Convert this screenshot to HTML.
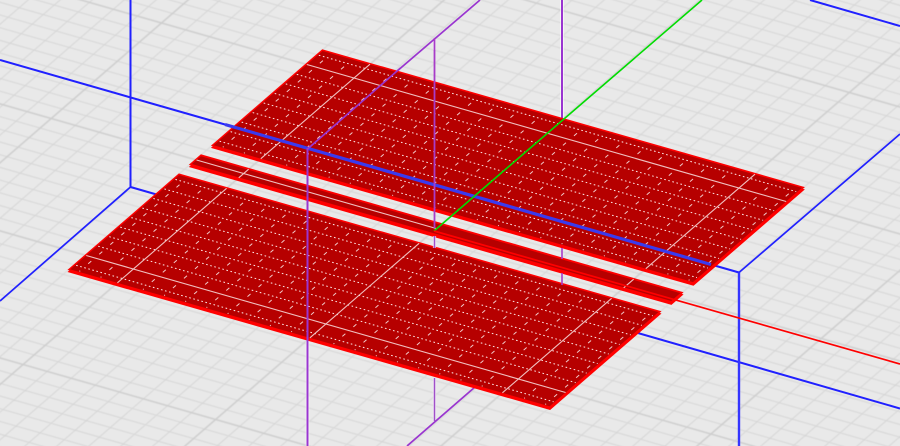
<!DOCTYPE html>
<html><head><meta charset="utf-8"><title>Plates</title>
<style>html,body{margin:0;padding:0;width:900px;height:446px;overflow:hidden;background:#e9e9e9}svg{display:block;overflow:hidden}</style></head>
<body>
<svg xmlns="http://www.w3.org/2000/svg" width="900" height="446" viewBox="0 0 900 446">
<defs>
<filter id="b" x="0" y="0" width="900" height="446" filterUnits="userSpaceOnUse"><feGaussianBlur stdDeviation=".4"/></filter>
<filter id="c" x="0" y="0" width="900" height="446" filterUnits="userSpaceOnUse"><feGaussianBlur stdDeviation=".3"/></filter>
</defs>
<rect width="900" height="446" fill="#e9e9e9"/>
<g filter="url(#b)">
<g transform="matrix(19.25 5.5 -11.03 9.55 354 78)" fill="none">
<path stroke="#d6d6d6" stroke-width="1" vector-effect="non-scaling-stroke" d="M-18-19H38M-18-18H38M-18-17H38M-18-16H38M-18-15H38M-18-14H38M-18-13H38M-18-12H38M-18-11H38M-18-9H38M-18-8H38M-18-7H38M-18-6H38M-18-5H38M-18-4H38M-18-3H38M-18-2H38M-18-1H38M-18 1H38M-18 2H38M-18 3H38M-18 4H38M-18 5H38M-18 6H38M-18 7H38M-18 8H38M-18 9H38M-18 11H38M-18 12H38M-18 13H38M-18 14H38M-18 15H38M-18 16H38M-18 17H38M-18 18H38M-18 19H38M-18 21H38M-18 22H38M-18 23H38M-18 24H38M-18 25H38M-18 26H38M-18 27H38M-18 28H38M-18 29H38M-18 31H38M-18 32H38M-18 33H38M-18 34H38M-18 35H38M-18 36H38M-18 37H38
M-17.5-19V37M-16.25-19V37M-15-19V37M-13.75-19V37M-12.5-19V37M-11.25-19V37M-8.75-19V37M-7.5-19V37M-6.25-19V37M-5-19V37M-3.75-19V37M-2.5-19V37M-1.25-19V37M1.25-19V37M2.5-19V37M3.75-19V37M5-19V37M6.25-19V37M7.5-19V37M8.75-19V37M11.25-19V37M12.5-19V37M13.75-19V37M15-19V37M16.25-19V37M17.5-19V37M18.75-19V37M21.25-19V37M22.5-19V37M23.75-19V37M25-19V37M26.25-19V37M27.5-19V37M28.75-19V37M31.25-19V37M32.5-19V37M33.75-19V37M35-19V37M36.25-19V37M37.5-19V37"/>
<path d="M-18-10H38M-18 0H38M-18 10H38M-18 20H38M-18 30H38M-10-19V37M0-19V37M10-19V37M20-19V37M30-19V37" stroke="#cecece" stroke-width="1.5" vector-effect="non-scaling-stroke"/>
</g>
</g>
<g fill="none" stroke="#2020ff" stroke-width="2">
<path d="M0 60L225 124.5"/>
<path d="M711 264.5L739 272.5"/>
<path d="M130.5 0V187"/>
<path d="M130.5 187L0 301" stroke-width="1.7"/>
<path d="M130.5 187L900 408.5"/>
<path d="M739 272.5L900 134" stroke-width="1.7"/>
<path d="M739 272.5V446" stroke="#3535ff" stroke-width="2.4"/>
<path d="M810 0L900 26"/>
</g>
<g fill="none">
<path d="M562 0V118" stroke="#fff" stroke-width="3.6" opacity=".7"/>
<path d="M562 0V118" stroke="#9a35d0" stroke-width="2"/>
<path d="M434.5 38V50" stroke="#fff" stroke-width="3" opacity=".6"/>
<path d="M480 0L305 150" stroke="#9a35d0" stroke-width="1.7"/>
<path d="M434.5 378V421" stroke="#fff" stroke-width="3.2" opacity=".7"/>
<path d="M434.5 378V421" stroke="#a050c8" stroke-width="1.6"/>
<path d="M490 374L407 446" stroke="#9a35d0" stroke-width="1.7"/>
<path d="M307.5 340V446" stroke="#fff" stroke-width="3.6" opacity=".6"/>
</g>
<!-- plates -->
<g transform="translate(0 2.2)">
<g transform="matrix(19.25 5.5 -11.03 9.55 354 78)" fill="#ff0000" stroke="#ff0000" stroke-width="1.2">
<rect x="-2.5" y="-1.5" width="25" height="10" vector-effect="non-scaling-stroke"/>
<rect x="-2.5" y="9.5" width="25" height="1" vector-effect="non-scaling-stroke"/>
<rect x="-2.5" y="11.5" width="25" height="10" vector-effect="non-scaling-stroke"/>
</g>
</g>
<g transform="matrix(19.25 5.5 -11.03 9.55 354 78)" fill="#ff0000" stroke="#ff0000" stroke-width="1.2">
<rect x="-2.5" y="-1.5" width="25" height="10" vector-effect="non-scaling-stroke"/>
<rect x="-2.5" y="9.5" width="25" height="1" vector-effect="non-scaling-stroke"/>
<rect x="-2.5" y="11.5" width="25" height="10" vector-effect="non-scaling-stroke"/>
</g>
<g transform="matrix(19.25 5.5 -11.03 9.55 354 78)" fill="#b60000">
<rect x="-2.45" y="-1.42" width="24.9" height="9.87"/>
<rect x="-2.45" y="9.6" width="24.9" height=".82"/>
<rect x="-2.45" y="11.58" width="24.9" height="9.87"/>
</g>
<g filter="url(#c)">
<g transform="matrix(19.25 5.5 -11.03 9.55 354 78)" fill="none">
<path d="M-2.4-1H22.4M-2.4 1H22.4M-2.4 2H22.4M-2.4 3H22.4M-2.4 4H22.4M-2.4 5H22.4M-2.4 6H22.4M-2.4 7H22.4M-2.4 8H22.4M-2.4 12H22.4M-2.4 13H22.4M-2.4 14H22.4M-2.4 15H22.4M-2.4 16H22.4M-2.4 17H22.4M-2.4 18H22.4M-2.4 19H22.4M-2.4 21H22.4" stroke="#ffe8e8" stroke-width="1" stroke-dasharray="1.6 2.6" vector-effect="non-scaling-stroke"/>
<path d="M-2-.67V8.4M-.9-.67V8.4M1.3-.67V8.4M2.4-.67V8.4M3.5-.67V8.4M4.6-.67V8.4M5.7-.67V8.4M6.8-.67V8.4M7.9-.67V8.4M9-.67V8.4M11.2-.67V8.4M12.3-.67V8.4M13.4-.67V8.4M14.5-.67V8.4M15.6-.67V8.4M16.7-.67V8.4M17.8-.67V8.4M18.9-.67V8.4M21.1-.67V8.4M22.2-.67V8.4M-2 12.33V21.4M-.9 12.33V21.4M1.3 12.33V21.4M2.4 12.33V21.4M3.5 12.33V21.4M4.6 12.33V21.4M5.7 12.33V21.4M6.8 12.33V21.4M7.9 12.33V21.4M9 12.33V21.4M11.2 12.33V21.4M12.3 12.33V21.4M13.4 12.33V21.4M14.5 12.33V21.4M15.6 12.33V21.4M16.7 12.33V21.4M17.8 12.33V21.4M18.9 12.33V21.4M21.1 12.33V21.4M22.2 12.33V21.4" stroke="#f0c8c8" stroke-width="1" stroke-dasharray="4 10.59" vector-effect="non-scaling-stroke"/>
<path d="M-2.45 0H22.45M-2.45 10H10M-2.45 20H22.45M0-1.45V8.45M20-1.45V8.45M0 9.55V10.45M20 9.55V10.45M0 11.55V21.45M20 11.55V21.45M10 11.55V21.45" stroke="#f0c0c0" stroke-width="1.1" vector-effect="non-scaling-stroke"/>
</g>
</g>
<!-- overlays -->
<g fill="none">
<path d="M225 124.5L711 264.5" stroke="#3a3aee" stroke-width="3.2"/>
<path d="M434 231L702 0" stroke="#00dd00" stroke-width="1.6"/>
<path d="M434 231L900 364" stroke="#ff0000" stroke-width="1.7"/>
<path d="M400.5 68L307.5 149" stroke="#9a35d0" stroke-width="1.7"/>
<path d="M434.5 38V228" stroke="#a83cc8" stroke-width="1.8"/>
<path d="M434.5 236V248" stroke="#fff" stroke-width="3.2" opacity=".7"/>
<path d="M434.5 236V248" stroke="#a050c8" stroke-width="1.6"/>
<path d="M562 248V259M562 273V285" stroke="#a83cc8" stroke-width="1.6"/>
<path d="M307.5 148V446" stroke="#9a35d0" stroke-width="2"/>
</g>
</svg>
</body></html>
